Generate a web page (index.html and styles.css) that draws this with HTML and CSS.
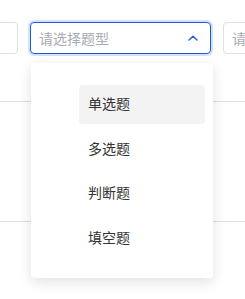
FILE: index.html
```html
<!DOCTYPE html>
<html lang="zh-CN">
<head>
  <meta charset="UTF-8">
  <meta name="viewport" content="width=device-width, initial-scale=1.0">
  <title>选择题型</title>
  <link rel="stylesheet" href="styles.css">
</head>
<body>
  <div class="toolbar">
    <div class="input"></div>
    <div class="select is-focus">
      <span class="placeholder">请选择题型</span>
      <svg class="arrow" width="10" height="6" viewBox="0 0 10 6">
        <path d="M1 5 L5 1.2 L9 5" fill="none" stroke="#1d5bd6" stroke-width="1.4" stroke-linecap="round" stroke-linejoin="round"/>
      </svg>
    </div>
    <div class="input">
      <span class="placeholder">请选择</span>
    </div>
  </div>

  <div class="row row-first"></div>
  <div class="row"></div>

  <ul class="dropdown">
    <li class="option hover">单选题</li>
    <li class="option">多选题</li>
    <li class="option">判断题</li>
    <li class="option">填空题</li>
  </ul>
</body>
</html>
```

FILE: styles.css
```css
body {
  margin: 0;
  padding: 0;
  width: 245px;
  height: 299px;
  overflow: hidden;
  background-color: #fff;
  font-family: "Noto Sans CJK SC", "Noto Sans", sans-serif;
  font-size: 14px;
  color: #303133;
  position: relative;
}
.toolbar {
  display: flex;
  gap: 12px;
  padding-top: 22px;
  margin-left: -82px;
}
.input,
.select {
  flex: none;
  box-sizing: border-box;
  height: 32px;
  border: 1px solid #dcdfe6;
  border-radius: 4px;
  display: flex;
  align-items: center;
  padding-left: 8px;
}
.input {
  width: 100px;
}
.select {
  width: 181px;
  padding-right: 12px;
  justify-content: space-between;
}
.select.is-focus {
  border-color: #1d5bd6;
  box-shadow: 0 0 0 2px rgba(29, 91, 214, 0.18);
}
.placeholder {
  color: #a8abb2;
  white-space: nowrap;
}
.arrow {
  display: block;
}
.row {
  height: 119px;
  border-bottom: 1px solid #dcdfe6;
}
.row-first {
  height: 47px;
}
.dropdown {
  list-style: none;
  margin: 0;
  position: absolute;
  left: 31px;
  top: 63px;
  width: 182px;
  height: 215px;
  box-sizing: border-box;
  padding: 22px 8px 0 48px;
  background-color: #fff;
  border-radius: 4px;
  box-shadow: 0 4px 14px rgba(0, 0, 0, 0.12);
  display: flex;
  flex-direction: column;
  gap: 5.5px;
}
.option {
  height: 39px;
  line-height: 37px;
  padding-left: 9px;
  border-radius: 4px;
  color: #333;
}
.option.hover {
  background-color: #f3f3f3;
}
```
